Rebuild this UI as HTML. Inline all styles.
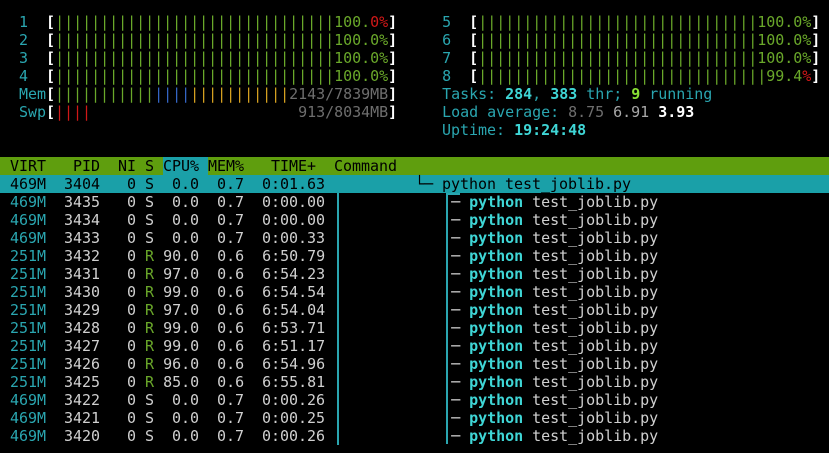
<!DOCTYPE html>
<html><head><meta charset="utf-8"><style>
html,body{margin:0;padding:0;background:#000;width:829px;height:453px;overflow:hidden}
pre{margin:0;position:absolute;left:1px;top:13px;font-family:"DejaVu Sans Mono","Liberation Mono",monospace;font-size:15px;line-height:18px;color:#d0d0d0;letter-spacing:-0.03px}
.c{color:#2aa6b0}.g{color:#6aa82a}.w{color:#fff;font-weight:bold}.r{color:#d01818}.b{color:#3465c4}.o{color:#d4a020}
.d{color:#6e6e6e}.gr{color:#a8a8a8}.bc{color:#3fd6d6;font-weight:bold}.bg{color:#8ae234;font-weight:bold}
.hdr{display:block;background:#5f9e0e;color:#000;margin-left:-1px;padding-left:1px;width:829px}
.hc{background:#1ba0a8}
.sel{display:block;background:#1aa0a8;color:#000;margin-left:-1px;padding-left:1px;width:829px}
.line{position:absolute;background:#2aa6b0;width:2px}
</style></head><body>
<pre>  <span class="c">1</span>  <span class="w">[</span><span class="g">|||||||||||||||||||||||||||||||100.</span><span class="r">0%</span><span class="w">]</span>     <span class="c">5</span>  <span class="w">[</span><span class="g">|||||||||||||||||||||||||||||||100.0%</span><span class="w">]</span>
  <span class="c">2</span>  <span class="w">[</span><span class="g">|||||||||||||||||||||||||||||||100.0%</span><span class="w">]</span>     <span class="c">6</span>  <span class="w">[</span><span class="g">|||||||||||||||||||||||||||||||100.0%</span><span class="w">]</span>
  <span class="c">3</span>  <span class="w">[</span><span class="g">|||||||||||||||||||||||||||||||100.0%</span><span class="w">]</span>     <span class="c">7</span>  <span class="w">[</span><span class="g">|||||||||||||||||||||||||||||||100.0%</span><span class="w">]</span>
  <span class="c">4</span>  <span class="w">[</span><span class="g">|||||||||||||||||||||||||||||||100.0%</span><span class="w">]</span>     <span class="c">8</span>  <span class="w">[</span><span class="g">||||||||||||||||||||||||||||||||99.4</span><span class="r">%</span><span class="w">]</span>
  <span class="c">Mem</span><span class="w">[</span><span class="g">|||||||||||</span><span class="b">||||</span><span class="o">|||||||||||</span><span class="d">2143/7839MB</span><span class="w">]</span>     <span class="c">Tasks: </span><span class="bc">284</span><span class="c">, </span><span class="bc">383</span><span class="c"> thr; </span><span class="bg">9</span><span class="c"> running</span>
  <span class="c">Swp</span><span class="w">[</span><span class="r">||||</span>                       <span class="d">913/8034MB</span><span class="w">]</span>     <span class="c">Load average: </span><span class="d">8.75 </span><span class="gr">6.91 </span><span class="w">3.93</span>
                                                 <span class="c">Uptime: </span><span class="bc">19:24:48</span>

<span class="hdr"> VIRT   PID  NI S <span class="hc">CPU% </span>MEM%   TIME+  Command</span><span class="sel"> 469M  3404   0 S  0.0  0.7  0:01.63          └─ python test_joblib.py</span> <span class="c">469M</span>  3435   0 S  0.0  0.7  0:00.00              ─ <span class="bc">python</span> test_joblib.py
 <span class="c">469M</span>  3434   0 S  0.0  0.7  0:00.00              ─ <span class="bc">python</span> test_joblib.py
 <span class="c">469M</span>  3433   0 S  0.0  0.7  0:00.33              ─ <span class="bc">python</span> test_joblib.py
 <span class="c">251M</span>  3432   0 <span class="g">R</span> 90.0  0.6  6:50.79              ─ <span class="bc">python</span> test_joblib.py
 <span class="c">251M</span>  3431   0 <span class="g">R</span> 97.0  0.6  6:54.23              ─ <span class="bc">python</span> test_joblib.py
 <span class="c">251M</span>  3430   0 <span class="g">R</span> 99.0  0.6  6:54.54              ─ <span class="bc">python</span> test_joblib.py
 <span class="c">251M</span>  3429   0 <span class="g">R</span> 97.0  0.6  6:54.04              ─ <span class="bc">python</span> test_joblib.py
 <span class="c">251M</span>  3428   0 <span class="g">R</span> 99.0  0.6  6:53.71              ─ <span class="bc">python</span> test_joblib.py
 <span class="c">251M</span>  3427   0 <span class="g">R</span> 99.0  0.6  6:51.17              ─ <span class="bc">python</span> test_joblib.py
 <span class="c">251M</span>  3426   0 <span class="g">R</span> 96.0  0.6  6:54.96              ─ <span class="bc">python</span> test_joblib.py
 <span class="c">251M</span>  3425   0 <span class="g">R</span> 85.0  0.6  6:55.81              ─ <span class="bc">python</span> test_joblib.py
 <span class="c">469M</span>  3422   0 S  0.0  0.7  0:00.26              ─ <span class="bc">python</span> test_joblib.py
 <span class="c">469M</span>  3421   0 S  0.0  0.7  0:00.25              ─ <span class="bc">python</span> test_joblib.py
 <span class="c">469M</span>  3420   0 S  0.0  0.7  0:00.26              ─ <span class="bc">python</span> test_joblib.py</pre>
<div class="line" style="left:337px;top:193px;height:252px"></div>
<div class="line" style="left:446px;top:193px;height:251px"></div>
<div style="position:absolute;left:446px;top:193px;width:14px;height:2px;background:#2aa6b0"></div>
</body></html>
